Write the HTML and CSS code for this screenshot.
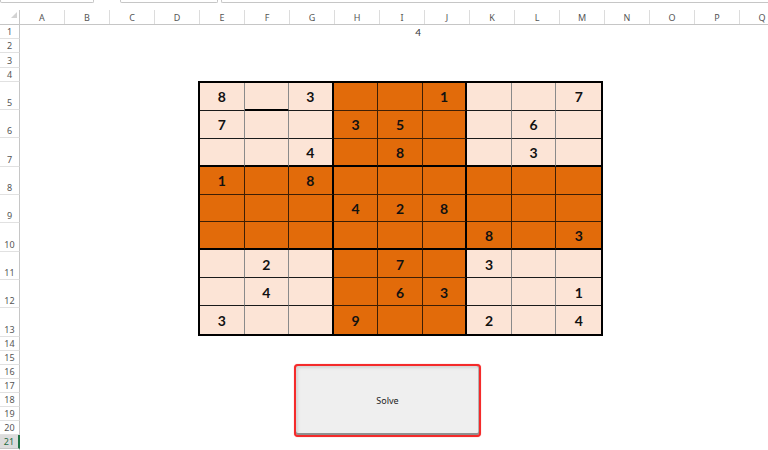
FILE: index.html
```html
<!DOCTYPE html>
<html>
<head>
<meta charset="utf-8">
<link rel="stylesheet" href="styles.css">
</head>
<body>
<div class="topbar"><div class="box b1"></div><div class="box b2"></div><div class="box b3"></div></div>
<div class="sheet">
  <div class="rowhdrs">
    <div class="corner"><span class="tri"></span></div>
    <div class="rh">1</div>
    <div class="rh">2</div>
    <div class="rh h15">3</div>
    <div class="rh">4</div>
    <div class="rh t28">5</div>
    <div class="rh t28">6</div>
    <div class="rh t29">7</div>
    <div class="rh t28">8</div>
    <div class="rh t28">9</div>
    <div class="rh t29">10</div>
    <div class="rh t28">11</div>
    <div class="rh t28">12</div>
    <div class="rh t29">13</div>
    <div class="rh">14</div>
    <div class="rh">15</div>
    <div class="rh">16</div>
    <div class="rh">17</div>
    <div class="rh">18</div>
    <div class="rh">19</div>
    <div class="rh">20</div>
    <div class="rh sel">21</div>
    <div class="rh"></div>
  </div>
  <div class="main">
    <div class="colhdrs">
      <div class="ch">A</div><div class="ch">B</div><div class="ch">C</div><div class="ch">D</div><div class="ch">E</div><div class="ch">F</div><div class="ch">G</div><div class="ch">H</div><div class="ch">I</div><div class="ch">J</div><div class="ch">K</div><div class="ch">L</div><div class="ch">M</div><div class="ch">N</div><div class="ch">O</div><div class="ch">P</div><div class="ch">Q</div>
    </div>
    <div class="body">
      <div class="i1">4</div>
      <div class="board">
        <div class="cell l">8</div><div class="cell l sel5"></div><div class="cell l">3</div><div class="cell d"></div><div class="cell d"></div><div class="cell d">1</div><div class="cell l"></div><div class="cell l"></div><div class="cell l">7</div>
        <div class="cell l">7</div><div class="cell l"></div><div class="cell l"></div><div class="cell d">3</div><div class="cell d">5</div><div class="cell d"></div><div class="cell l"></div><div class="cell l">6</div><div class="cell l"></div>
        <div class="cell l"></div><div class="cell l"></div><div class="cell l">4</div><div class="cell d"></div><div class="cell d">8</div><div class="cell d"></div><div class="cell l"></div><div class="cell l">3</div><div class="cell l"></div>
        <div class="cell d">1</div><div class="cell d"></div><div class="cell d">8</div><div class="cell d"></div><div class="cell d"></div><div class="cell d"></div><div class="cell d"></div><div class="cell d"></div><div class="cell d"></div>
        <div class="cell d"></div><div class="cell d"></div><div class="cell d"></div><div class="cell d">4</div><div class="cell d">2</div><div class="cell d">8</div><div class="cell d"></div><div class="cell d"></div><div class="cell d"></div>
        <div class="cell d"></div><div class="cell d"></div><div class="cell d"></div><div class="cell d"></div><div class="cell d"></div><div class="cell d"></div><div class="cell d">8</div><div class="cell d"></div><div class="cell d">3</div>
        <div class="cell l"></div><div class="cell l">2</div><div class="cell l"></div><div class="cell d"></div><div class="cell d">7</div><div class="cell d"></div><div class="cell l">3</div><div class="cell l"></div><div class="cell l"></div>
        <div class="cell l"></div><div class="cell l">4</div><div class="cell l"></div><div class="cell d"></div><div class="cell d">6</div><div class="cell d">3</div><div class="cell l"></div><div class="cell l"></div><div class="cell l">1</div>
        <div class="cell l">3</div><div class="cell l"></div><div class="cell l"></div><div class="cell d">9</div><div class="cell d"></div><div class="cell d"></div><div class="cell l">2</div><div class="cell l"></div><div class="cell l">4</div>
      </div>
    </div>
  </div>
</div>
<button class="solve">Solve</button>
</body>
</html>
```

FILE: styles.css
```css
body {
  margin: 0;
  background: #fff;
  width: 768px;
  height: 450px;
  overflow: hidden;
  position: relative;
  font-family: "Noto Sans", "Liberation Sans", sans-serif;
}

.topbar {
  height: 10px;
  display: flex;
  align-items: flex-start;
}

.box {
  height: 3px;
  box-sizing: border-box;
  border: 1px solid #c6c6c6;
  border-top: none;
  border-radius: 0 0 2px 2px;
}

.b1 { width: 94px; }
.b2 { width: 98px; margin-left: 26px; }
.b3 { flex: 1; margin-left: 3px; border-right: none; border-radius: 0 0 0 2px; }

.sheet {
  display: flex;
  height: 440px;
  overflow: hidden;
}

.rowhdrs {
  width: 20px;
  flex: none;
}

.corner {
  height: 15px;
  box-sizing: border-box;
  border-bottom: 1px solid #c6c6c6;
  border-right: 1px solid #c6c6c6;
  display: flex;
  justify-content: flex-end;
  align-items: flex-end;
  padding: 0 2px 6px 0;
}

.tri {
  width: 0;
  height: 0;
  border-left: 6px solid transparent;
  border-bottom: 6px solid #d3d3d3;
}

.rh {
  height: 14px;
  box-sizing: border-box;
  border-bottom: 1px solid #e1e1e1;
  border-right: 1px solid #c6c6c6;
  font-size: 9px;
  line-height: 1;
  color: #555;
  display: flex;
  align-items: center;
  justify-content: center;
}

.rh.h15 { height: 15px; }
.rh.t28 { height: 28px; align-items: flex-end; padding-bottom: 2px; }
.rh.t29 { height: 29px; align-items: flex-end; padding-bottom: 2px; }

.rh.sel {
  background: #dcdcdc;
  color: #1e6b40;
  border-right: 2px solid #217346;
  border-bottom-color: #c6c6c6;
}

.main {
  flex: 1;
  min-width: 0;
  overflow: hidden;
}

.colhdrs {
  display: flex;
  height: 15px;
  box-sizing: border-box;
  border-bottom: 1px solid #c6c6c6;
}

.ch {
  flex: none;
  width: 45px;
  box-sizing: border-box;
  border-right: 1px solid #dcdcdc;
  font-size: 9px;
  color: #555;
  display: flex;
  align-items: center;
  justify-content: center;
}

.body {
  display: grid;
  grid-template-columns: repeat(17, 45px);
  grid-template-rows: 14px 14px 15px 14px 28px 28px 29px 28px 28px 29px 28px 28px 29px repeat(9, 14px);
}

.i1 {
  grid-column: 9;
  grid-row: 1;
  text-align: right;
  padding-right: 4px;
  font-family: Lato, "Liberation Sans", sans-serif;
  font-size: 10px;
  line-height: 14px;
  color: #333;
}

.board {
  grid-column: 5 / span 9;
  grid-row: 5 / span 9;
  align-self: start;
  justify-self: start;
  width: 405px;
  height: 255px;
  margin: -1px 0 0 -2px;
  box-sizing: border-box;
  border: 2px solid #000;
  display: grid;
  grid-template-columns: repeat(9, 1fr);
  grid-template-rows: repeat(9, 1fr);
}

.cell {
  box-sizing: border-box;
  border-right: 1px solid;
  border-bottom: 1px solid;
  display: flex;
  align-items: center;
  justify-content: center;
  font-family: Lato, "Liberation Sans", sans-serif;
  font-weight: 700;
  font-size: 14px;
  color: #111;
  padding-top: 1px;
}

.l {
  background: #fce4d6;
  border-right-color: #8a8a8a;
  border-bottom-color: #1a1a1a;
}

.d {
  background: #e26b0a;
  border-color: #3d1e05;
}

.board > :nth-child(9n+3),
.board > :nth-child(9n+6) {
  border-right: 2px solid #000;
}

.board > :nth-child(9n) {
  border-right: none;
}

.board > :nth-child(n+19):nth-child(-n+27),
.board > :nth-child(n+46):nth-child(-n+54) {
  border-bottom: 2px solid #000;
}

.board > :nth-child(n+73) {
  border-bottom: none;
}

.board > .sel5 {
  border-bottom: 2px solid #000;
}

.solve {
  position: absolute;
  left: 294px;
  top: 364px;
  width: 187px;
  height: 73px;
  box-sizing: border-box;
  border: 2px solid #f42a2a;
  border-radius: 4px;
  background: #efefef;
  box-shadow: inset 0 -2px 0 #8f8f8f, inset -1px 0 0 #b4b4b4, inset 2px 2px 3px #d4d4d4, 0 0 1px rgba(255, 0, 0, 0.6);
  font-family: "Noto Sans", "Liberation Sans", sans-serif;
  font-size: 9px;
  color: #222;
  padding: 0;
  display: flex;
  align-items: center;
  justify-content: center;
}
```
